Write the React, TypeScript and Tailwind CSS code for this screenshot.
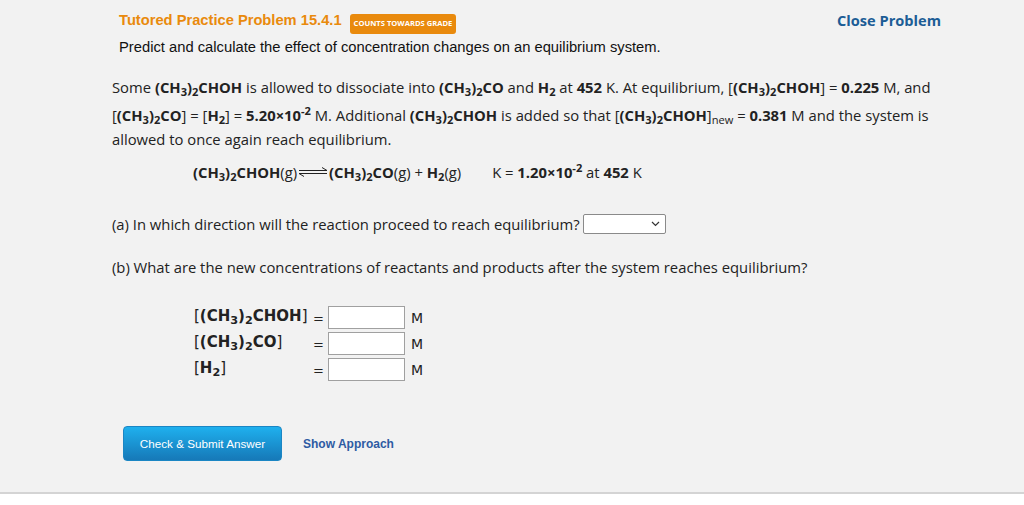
import React from "react";

const open = { fontFamily: '"Open Sans", "Liberation Sans", sans-serif' };
const arial = { fontFamily: '"Liberation Sans", Arial, sans-serif' };
const verdana = { fontFamily: '"DejaVu Sans", Verdana, sans-serif' };

function Sub({ children }: { children: React.ReactNode }) {
  return <sub>{children}</sub>;
}

function Arrow() {
  return (
    <svg width="30" height="10" viewBox="0 0 30 10" className="inline-block mx-[1px]" style={{ verticalAlign: "1px" }}>
      <path d="M1 3.5 H29 L24 0.5" fill="none" stroke="#222" strokeWidth="1" />
      <path d="M29 6.5 H1 L6 9.5" fill="none" stroke="#222" strokeWidth="1" />
    </svg>
  );
}

export default function App() {
  return (
    <div className="w-full h-[505px] flex flex-col bg-white">
      <div className="h-[492px] bg-[#f2f2f2] text-[#222]">
        <div className="flex justify-between pl-[119px] pr-[83px] pt-[10px]">
          <div className="flex items-start gap-[8px]">
            <span className="text-[14.7px] leading-[20px] font-bold text-[#e98a0d]" style={arial}>
              Tutored Practice Problem 15.4.1
            </span>
            <span
              className="mt-[4px] h-[20px] px-[4px] rounded-[3px] bg-[#e98a0d] text-white text-[7.6px] font-bold flex items-center"
              style={open}
            >
              COUNTS TOWARDS GRADE
            </span>
          </div>
          <span className="text-[14.6px] leading-[20px] font-bold text-[#1c5d96]" style={open}>
            Close Problem
          </span>
        </div>
        <div className="pl-[119px] mt-[3px] text-[14.75px] leading-[20px] text-[#111]" style={arial}>
          Predict and calculate the effect of concentration changes on an equilibrium system.
        </div>

        <div className="pl-[112px] mt-[16px] text-[14.8px] text-[#222]" style={open}>
          <div className="leading-[28px] whitespace-nowrap">
            Some <b>(CH<Sub>3</Sub>)<Sub>2</Sub>CHOH</b> is allowed to dissociate into <b>(CH<Sub>3</Sub>)<Sub>2</Sub>CO</b> and{" "}
            <b>H<Sub>2</Sub></b> at <b>452</b> K. At equilibrium, [<b>(CH<Sub>3</Sub>)<Sub>2</Sub>CHOH</b>] = <b>0.225</b> M, and
          </div>
          <div className="leading-[28px] whitespace-nowrap">
            [<b>(CH<Sub>3</Sub>)<Sub>2</Sub>CO</b>] = [<b>H<Sub>2</Sub></b>] = <b>5.20×10<sup>-2</sup></b> M. Additional{" "}
            <b>(CH<Sub>3</Sub>)<Sub>2</Sub>CHOH</b> is added so that [<b>(CH<Sub>3</Sub>)<Sub>2</Sub>CHOH</b>]<Sub>new</Sub> ={" "}
            <b>0.381</b> M and the system is
          </div>
          <div className="leading-[20px]">allowed to once again reach equilibrium.</div>

          <div className="pl-[81px] mt-[13px] leading-[20px] flex items-center">
            <span>
              <b>(CH<Sub>3</Sub>)<Sub>2</Sub>CHOH</b>(g)
              <Arrow />
              <b>(CH<Sub>3</Sub>)<Sub>2</Sub>CO</b>(g) + <b>H<Sub>2</Sub></b>(g)
            </span>
            <span className="ml-[31px]">
              K = <b>1.20×10<sup>-2</sup></b> at <b>452</b> K
            </span>
          </div>

          <div className="mt-[32px] flex items-center leading-[20px]">
            <span>(a) In which direction will the reaction proceed to reach equilibrium?</span>
            <span className="ml-[3px] w-[83px] h-[20px] bg-white border border-[#8a8a8a] rounded-[2px] flex items-center justify-end pr-[5px]">
              <svg width="9" height="6" viewBox="0 0 9 6">
                <path d="M1 1 L4.5 4.5 L8 1" fill="none" stroke="#333" strokeWidth="1.2" />
              </svg>
            </span>
          </div>

          <div className="mt-[23px] leading-[20px]">
            (b) What are the new concentrations of reactants and products after the system reaches equilibrium?
          </div>
        </div>

        <div className="pl-[194px] mt-[29px] text-[15px] text-[#222] flex flex-col gap-[3px]" style={verdana}>
          {[
            <>[<b>(CH<Sub>3</Sub>)<Sub>2</Sub>CHOH</b>]</>,
            <>[<b>(CH<Sub>3</Sub>)<Sub>2</Sub>CO</b>]</>,
            <>[<b>H<Sub>2</Sub></b>]</>,
          ].map((label, i) => (
            <div key={i} className="flex items-center h-[23px]">
              <span className="w-[119px] leading-[20px] self-start whitespace-nowrap">{label}</span>
              <span className="w-[15px] text-[13px] leading-[20px] mt-[3px]">=</span>
              <span className="w-[77px] h-[23px] bg-white border border-[#a0a0a0]" />
              <span className="ml-[6px] text-[14px] leading-[20px]">M</span>
            </div>
          ))}
        </div>

        <div className="pl-[123px] mt-[45px] flex items-center" style={arial}>
          <button className="w-[159px] h-[35px] rounded-[4px] border border-[#1b86c4] bg-gradient-to-b from-[#1fb0ee] to-[#1679b8] text-white text-[11.7px]">
            Check &amp; Submit Answer
          </button>
          <span className="ml-[21px] text-[12px] font-bold text-[#2d5ba3]">Show Approach</span>
        </div>
      </div>
      <div className="h-[2px] bg-[#d4d4d4]" />
      <div className="flex-1 bg-white" />
    </div>
  );
}
